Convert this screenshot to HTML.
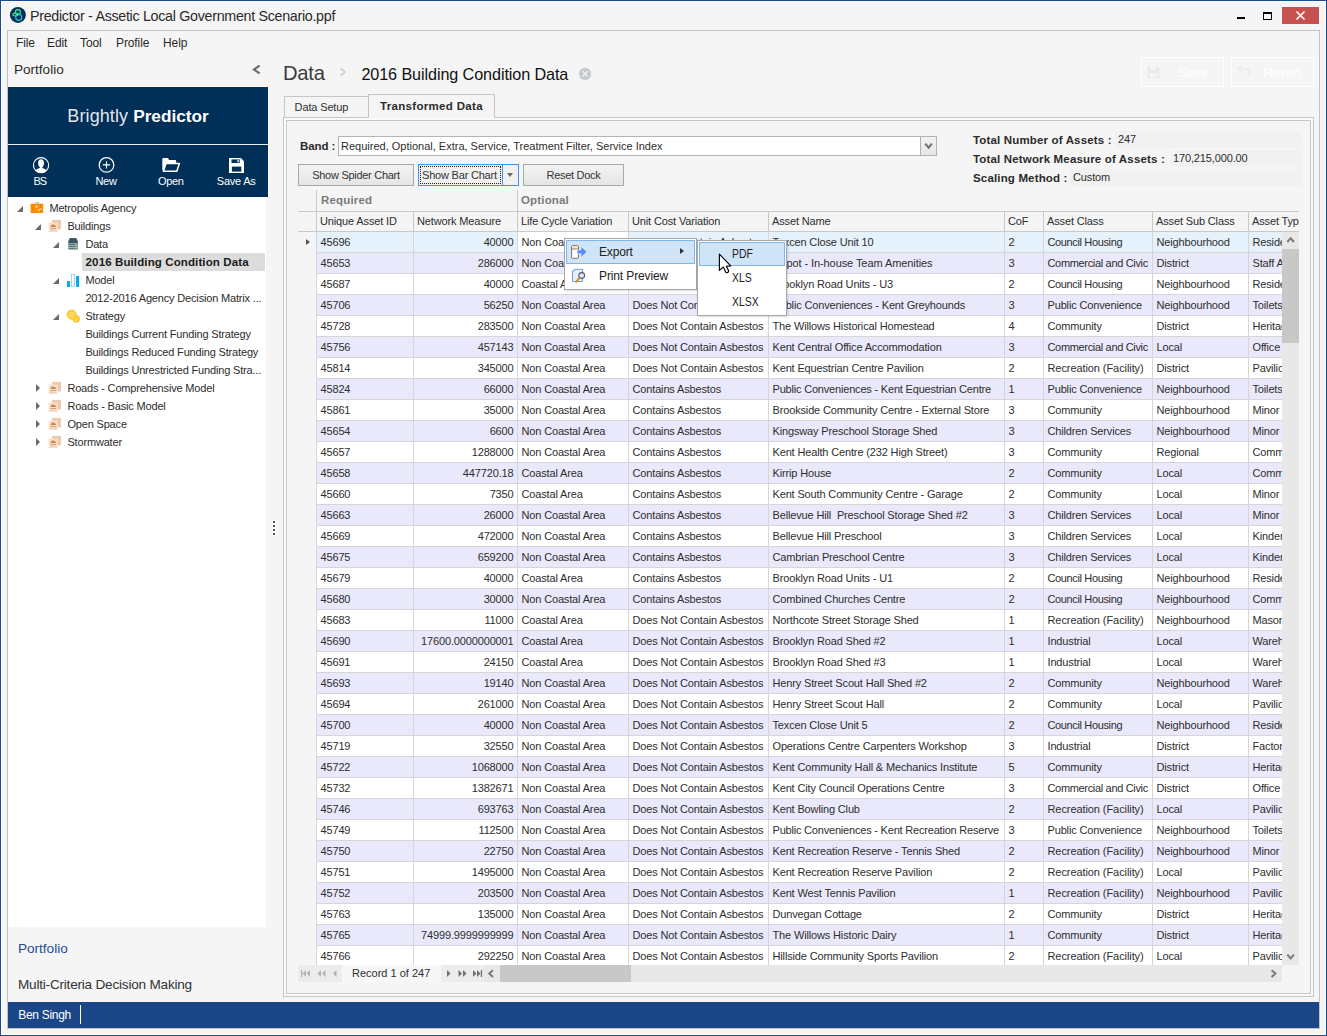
<!DOCTYPE html>
<html><head><meta charset="utf-8"><title>Predictor</title>
<style>
html,body{margin:0;padding:0}
body{width:1327px;height:1036px;position:relative;overflow:hidden;background:#f5f5f5;font-family:"Liberation Sans",sans-serif;font-size:11px;color:#202020}
.a{position:absolute;white-space:pre}
.t{position:absolute;white-space:pre;font-size:11px;letter-spacing:-0.14px;color:#2e2e2e;line-height:14px}
.b{font-weight:bold;font-size:11.5px;letter-spacing:0.16px;color:#2b2b2b}
.tr{position:absolute;white-space:pre;font-size:11px;letter-spacing:-0.17px;color:#2c2c2c;line-height:18px;height:18px}
.tri{position:absolute;width:0;height:0;border-style:solid;border-width:0 0 6px 6px;border-color:transparent transparent #6a6a6a transparent}
.trc{position:absolute;width:0;height:0;border-style:solid;border-width:4px 0 4px 4px;border-color:transparent transparent transparent #6a6a6a}
.row{position:absolute;left:317px;width:965px;height:20px;border-bottom:1px solid #d6d6d6;overflow:hidden}
.c{position:absolute;top:0;height:20px;line-height:20px;white-space:pre;overflow:hidden;font-size:11px;letter-spacing:-0.15px;color:#2e2e2e;border-right:1px solid #d6d6d6;box-sizing:border-box;padding:0 3.5px 0 3.5px}
.r{text-align:right}
.btn{position:absolute;box-sizing:border-box;border:1px solid #a9a9a9;background:linear-gradient(#f3f3f3,#e5e5e5);text-align:center;font-size:11px;letter-spacing:-0.28px;color:#333}
</style></head><body>

<div class="a" style="left:0;top:0;width:1325px;height:1034px;border:1px solid #1c4a8d"></div>
<div class="a" style="left:1px;top:1034px;width:1325px;height:1px;background:#fff"></div>
<div class="a" style="left:1px;top:1px;width:1px;height:1034px;background:#fff"></div>
<div class="a" style="left:1px;top:1px;width:1325px;height:1px;background:#fcfcfc"></div>
<div class="a" style="left:1325px;top:1px;width:1px;height:1034px;background:#fff"></div>
<div class="a" style="left:7px;top:30px;width:1311px;height:997px;border:1px solid #c2c2c2"></div>
<div class="a" style="left:8px;top:1002px;width:1311px;height:26px;background:#1b4788"></div>
<div class="a" style="left:18.3px;top:1003px;line-height:25px;font-size:12px;color:#fff;letter-spacing:-0.3px">Ben Singh</div>
<div class="a" style="left:80px;top:1005px;width:1px;height:19px;background:#fff"></div>
<svg class="a" style="left:9px;top:6px" width="18" height="18" viewBox="0 0 18 18"><circle cx="8.9" cy="8.9" r="8.6" fill="#fff"/><circle cx="8.9" cy="8.9" r="8" fill="#04305a"/>
<g fill="none" stroke-width="1.1"><circle cx="9.7" cy="11.4" r="3" stroke="#20c9bd"/><ellipse cx="6.4" cy="8.5" rx="2.6" ry="1.4" stroke="#34e8a4"/><circle cx="8.9" cy="6.1" r="2.5" stroke="#3af2a0"/></g></svg>
<div class="a" style="left:30px;top:6px;font-size:14.3px;line-height:20px;color:#2a2a2a;letter-spacing:-0.31px">Predictor - Assetic Local Government Scenario.ppf</div>
<div class="a" style="left:1237px;top:17px;width:8px;height:2px;background:#000"></div>
<div class="a" style="left:1263px;top:12px;width:7px;height:5px;border:1px solid #000;border-top-width:2px"></div>
<div class="a" style="left:1282px;top:7px;width:37px;height:17px;background:#c75050"></div>
<svg class="a" style="left:1295px;top:10px" width="11" height="11" viewBox="0 0 11 11"><path d="M1.5 1.5 L9.5 9.5 M9.5 1.5 L1.5 9.5" stroke="#fff" stroke-width="1.7" fill="none"/></svg>
<div class="a" style="left:16px;top:35px;font-size:12px;line-height:16px;color:#2a2a2a;letter-spacing:-0.1px">File</div>
<div class="a" style="left:47px;top:35px;font-size:12px;line-height:16px;color:#2a2a2a;letter-spacing:-0.1px">Edit</div>
<div class="a" style="left:80px;top:35px;font-size:12px;line-height:16px;color:#2a2a2a;letter-spacing:-0.1px">Tool</div>
<div class="a" style="left:116px;top:35px;font-size:12px;line-height:16px;color:#2a2a2a;letter-spacing:-0.1px">Profile</div>
<div class="a" style="left:163px;top:35px;font-size:12px;line-height:16px;color:#2a2a2a;letter-spacing:-0.1px">Help</div>
<div class="a" style="left:14px;top:60px;font-size:13.6px;line-height:20px;color:#2a2a2a;letter-spacing:-0.02px">Portfolio</div>
<svg class="a" style="left:251px;top:63px" width="10" height="13" viewBox="0 0 10 13"><path d="M8.6 2.6 L3 6.5 L8.6 10.4" stroke="#6a6a6a" stroke-width="2.1" fill="none"/></svg>
<div class="a" style="left:8px;top:86px;width:261px;height:111px;background:#fdfdfd"></div>
<div class="a" style="left:8px;top:87px;width:260px;height:110px;background:#003057"></div>
<div class="a" style="left:8px;top:144px;width:260px;height:1px;background:#e8eef3"></div>
<div class="a" style="left:8px;top:104px;width:260px;text-align:center;font-size:18px;line-height:24px;color:#fff"><span style="letter-spacing:0.1px;color:rgba(255,255,255,0.9)">Brightly</span> <span style="font-weight:bold;font-size:17.2px">Predictor</span></div>
<svg class="a" style="left:31px;top:155px" width="20" height="20" viewBox="0 0 20 20"><circle cx="10.05" cy="10.2" r="7.6" fill="none" stroke="#fff" stroke-width="1.1"/><ellipse cx="10.05" cy="8.2" rx="2.9" ry="3.9" fill="#fff"/><path d="M8.8 11 H11.3 V13 Q14.6 13.8 15.6 15.4 Q13.2 17.9 10.05 17.9 Q6.9 17.9 4.5 15.4 Q5.5 13.8 8.8 13Z" fill="#fff"/></svg>
<svg class="a" style="left:96px;top:155px" width="20" height="20" viewBox="0 0 20 20"><circle cx="10.5" cy="9.9" r="7.3" fill="none" stroke="#fff" stroke-width="1.2"/><path d="M10.5 6.3V13.5M6.9 9.9H14.1" stroke="#fff" stroke-width="1.1"/></svg>
<svg class="a" style="left:161px;top:156px" width="20" height="18" viewBox="0 0 20 18"><path d="M1.3 14 V3.3 Q1.3 2.1 2.5 2.1 H6.2 Q7.2 2.1 7.6 3 L8 3.9 H14 Q15.2 3.9 15.2 5.1 V7 H4.8 L2.3 14.6 Z" fill="#fff"/><path d="M2.4 15.2 L5 7.6 H18.4 L15.8 15.2 Z" fill="none" stroke="#fff" stroke-width="1.5" stroke-linejoin="round"/></svg>
<svg class="a" style="left:228px;top:157px" width="17" height="17" viewBox="0 0 17 17"><path d="M1 1 H12.8 L16 4.2 V16 H1 Z" fill="#fff"/><rect x="3.5" y="2.4" width="8.2" height="3.6" fill="#003057"/><rect x="9.4" y="2.9" width="1.3" height="2.4" fill="#fff"/><rect x="3.9" y="9.6" width="9.4" height="5" fill="#003057"/></svg>
<div class="a" style="left:-0.20000000000000284px;width:80px;text-align:center;top:173px;font-size:11px;line-height:16px;color:#fff;letter-spacing:-0.9px">BS</div>
<div class="a" style="left:66px;width:80px;text-align:center;top:173px;font-size:11px;line-height:16px;color:#fff;letter-spacing:-0.3px">New</div>
<div class="a" style="left:130.7px;width:80px;text-align:center;top:173px;font-size:11px;line-height:16px;color:#fff;letter-spacing:-0.35px">Open</div>
<div class="a" style="left:196.2px;width:80px;text-align:center;top:173px;font-size:11px;line-height:16px;color:#fff;letter-spacing:-0.22px">Save As</div>
<div class="a" style="left:8px;top:197px;width:258px;height:730px;background:#fff"></div>
<div class="a" style="left:82px;top:253px;width:183px;height:18px;background:#dcdcdc"></div>
<div class="tri" style="left:17px;top:206px"></div>
<svg class="a" style="left:30px;top:202px" width="14" height="13" viewBox="0 0 14 13"><path d="M5.2 2 Q5.2 0.4 7.1 0.4 Q9 0.4 9 2" fill="none" stroke="#b3a9a9" stroke-width="0.9"/><rect x="0.6" y="1.8" width="12.6" height="9.3" rx="0.5" fill="#ff8c00"/><rect x="2.6" y="1.8" width="0.9" height="9.3" fill="#ee7e00"/><rect x="10.1" y="1.8" width="0.9" height="9.3" fill="#ee7e00"/><circle cx="6.5" cy="4.6" r="1.2" fill="#ffe3b8"/><path d="M7.7 8.6 L11.4 6.6" stroke="#ffd59a" stroke-width="1.4"/></svg>
<div class="tr" style="left:49.4px;top:199px">Metropolis Agency</div>
<div class="tri" style="left:35px;top:224px"></div>
<svg class="a" style="left:48px;top:219px" width="14" height="14" viewBox="0 0 14 14"><rect x="4.1" y="0.9" width="8.9" height="9.5" fill="#f0c9ac"/><rect x="0.7" y="3.6" width="8.9" height="9.4" fill="#f6dfcd"/><path d="M2.2 7.9 L4.5 5 L5.8 6.5 L6.8 5.5 L8 7.9Z" fill="#c98545"/><rect x="2.2" y="9" width="5.9" height="1" fill="#d9a274"/><rect x="2.2" y="10.8" width="5.9" height="0.8" fill="#ecc9ae"/></svg>
<div class="tr" style="left:67.4px;top:217px">Buildings</div>
<div class="tri" style="left:53px;top:242px"></div>
<svg class="a" style="left:68px;top:238px" width="11" height="13" viewBox="0 0 11 13"><path d="M0.2 5 V3.8 L1.4 0.7 Q1.6 0.1 2.3 0.1 H7.8 Q8.5 0.1 8.7 0.7 L9.9 3.8 V5Z" fill="#3f5562"/><rect x="0.2" y="5.3" width="9.7" height="1.9" fill="#5b7686"/><rect x="0.2" y="7.5" width="9.7" height="1.9" fill="#5b7686"/><rect x="0.2" y="9.7" width="9.7" height="1.9" rx="0.5" fill="#5b7686"/><rect x="7" y="5.8" width="2" height="0.9" fill="#7ed321"/><rect x="7" y="8" width="2" height="0.9" fill="#7ed321"/><rect x="7" y="10.2" width="2" height="0.9" fill="#7ed321"/></svg>
<div class="tr" style="left:85.4px;top:235px">Data</div>
<div class="tr" style="left:85.6px;top:253px;font-weight:bold;font-size:11.5px;letter-spacing:0.12px;color:#1a1a1a">2016 Building Condition Data</div>
<div class="tri" style="left:53px;top:278px"></div>
<svg class="a" style="left:67px;top:274px" width="13" height="13" viewBox="0 0 13 13"><rect x="0" y="7.1" width="3" height="5.8" fill="#00a8f0"/><rect x="4.5" y="0.4" width="3" height="12.1" fill="#fff" stroke="#7fd0f7" stroke-width="0.8"/><rect x="9.1" y="2" width="3" height="10.9" fill="#00a8f0"/></svg>
<div class="tr" style="left:85.4px;top:271px">Model</div>
<div class="tr" style="left:85.4px;top:289px">2012-2016 Agency Decision Matrix ...</div>
<div class="tri" style="left:53px;top:314px"></div>
<svg class="a" style="left:66px;top:309px" width="15" height="15" viewBox="0 0 15 15"><circle cx="10.3" cy="9.9" r="3.4" fill="#ffd044" stroke="#f5bb1b" stroke-width="0.7"/><circle cx="5.6" cy="5.6" r="4.6" fill="#ffcf3e" stroke="#f7bd1c" stroke-width="0.8"/><circle cx="5.6" cy="5.6" r="2.8" fill="#ffd95f"/></svg>
<div class="tr" style="left:85.4px;top:307px">Strategy</div>
<div class="tr" style="left:85.4px;top:325px">Buildings Current Funding Strategy</div>
<div class="tr" style="left:85.4px;top:343px">Buildings Reduced Funding Strategy</div>
<div class="tr" style="left:85.4px;top:361px">Buildings Unrestricted Funding Stra...</div>
<div class="trc" style="left:36px;top:384px"></div>
<svg class="a" style="left:48px;top:381px" width="14" height="14" viewBox="0 0 14 14"><rect x="4.1" y="0.9" width="8.9" height="9.5" fill="#f0c9ac"/><rect x="0.7" y="3.6" width="8.9" height="9.4" fill="#f6dfcd"/><path d="M2.2 7.9 L4.5 5 L5.8 6.5 L6.8 5.5 L8 7.9Z" fill="#c98545"/><rect x="2.2" y="9" width="5.9" height="1" fill="#d9a274"/><rect x="2.2" y="10.8" width="5.9" height="0.8" fill="#ecc9ae"/></svg>
<div class="tr" style="left:67.4px;top:379px">Roads - Comprehensive Model</div>
<div class="trc" style="left:36px;top:402px"></div>
<svg class="a" style="left:48px;top:399px" width="14" height="14" viewBox="0 0 14 14"><rect x="4.1" y="0.9" width="8.9" height="9.5" fill="#f0c9ac"/><rect x="0.7" y="3.6" width="8.9" height="9.4" fill="#f6dfcd"/><path d="M2.2 7.9 L4.5 5 L5.8 6.5 L6.8 5.5 L8 7.9Z" fill="#c98545"/><rect x="2.2" y="9" width="5.9" height="1" fill="#d9a274"/><rect x="2.2" y="10.8" width="5.9" height="0.8" fill="#ecc9ae"/></svg>
<div class="tr" style="left:67.4px;top:397px">Roads - Basic Model</div>
<div class="trc" style="left:36px;top:420px"></div>
<svg class="a" style="left:48px;top:417px" width="14" height="14" viewBox="0 0 14 14"><rect x="4.1" y="0.9" width="8.9" height="9.5" fill="#f0c9ac"/><rect x="0.7" y="3.6" width="8.9" height="9.4" fill="#f6dfcd"/><path d="M2.2 7.9 L4.5 5 L5.8 6.5 L6.8 5.5 L8 7.9Z" fill="#c98545"/><rect x="2.2" y="9" width="5.9" height="1" fill="#d9a274"/><rect x="2.2" y="10.8" width="5.9" height="0.8" fill="#ecc9ae"/></svg>
<div class="tr" style="left:67.4px;top:415px">Open Space</div>
<div class="trc" style="left:36px;top:438px"></div>
<svg class="a" style="left:48px;top:435px" width="14" height="14" viewBox="0 0 14 14"><rect x="4.1" y="0.9" width="8.9" height="9.5" fill="#f0c9ac"/><rect x="0.7" y="3.6" width="8.9" height="9.4" fill="#f6dfcd"/><path d="M2.2 7.9 L4.5 5 L5.8 6.5 L6.8 5.5 L8 7.9Z" fill="#c98545"/><rect x="2.2" y="9" width="5.9" height="1" fill="#d9a274"/><rect x="2.2" y="10.8" width="5.9" height="0.8" fill="#ecc9ae"/></svg>
<div class="tr" style="left:67.4px;top:433px">Stormwater</div>
<div class="a" style="left:18px;top:939px;font-size:13.6px;line-height:20px;color:#1f4e96;letter-spacing:-0.02px">Portfolio</div>
<div class="a" style="left:18px;top:975px;font-size:13.6px;line-height:20px;color:#333;letter-spacing:-0.22px">Multi-Criteria Decision Making</div>
<div class="a" style="left:272px;top:520px;width:2px;height:2px;background:#555;border:1px solid #fafafa"></div>
<div class="a" style="left:272px;top:524px;width:2px;height:2px;background:#555;border:1px solid #fafafa"></div>
<div class="a" style="left:272px;top:528px;width:2px;height:2px;background:#555;border:1px solid #fafafa"></div>
<div class="a" style="left:272px;top:532px;width:2px;height:2px;background:#555;border:1px solid #fafafa"></div>
<div class="a" style="left:283px;top:59px;font-size:20.2px;line-height:28px;color:#3a3a3a;letter-spacing:-0.24px">Data</div>
<svg class="a" style="left:339px;top:67px" width="8" height="10" viewBox="0 0 8 10"><path d="M1.7 1.2 L5.8 5 L1.7 8.8" stroke="#c3c8c9" stroke-width="1.5" fill="none"/></svg>
<div class="a" style="left:361.4px;top:62px;font-size:16.2px;line-height:24px;color:#111;letter-spacing:-0.1px">2016 Building Condition Data</div>
<svg class="a" style="left:578px;top:67px" width="14" height="14" viewBox="0 0 14 14"><circle cx="7.05" cy="6.9" r="6.05" fill="#c3c9cc"/><path d="M4.4 4.3 L9.7 9.5 M9.7 4.3 L4.4 9.5" stroke="#f1f3f3" stroke-width="1.3"/></svg>
<div class="a" style="left:1141px;top:57px;width:81px;height:28px;border:1px solid #fff"></div>
<div class="a" style="left:1231px;top:57px;width:81px;height:28px;border:1px solid #fff"></div>
<svg class="a" style="left:1147px;top:66px" width="13" height="13" viewBox="0 0 13 13"><path d="M0.5 0.5 H10 L12.5 3 V12.5 H0.5Z" fill="#e9e9e9"/><rect x="3" y="0.5" width="6" height="3.8" fill="#f5f5f5"/><rect x="2.5" y="7" width="8" height="4.5" fill="#f5f5f5"/></svg>
<div class="a" style="left:1178.6px;top:63px;font-size:13.2px;line-height:20px;color:#fff;letter-spacing:-0.25px">Save</div>
<svg class="a" style="left:1237px;top:65px" width="14" height="14" viewBox="0 0 14 14"><path d="M1.5 4 H8 Q12 4 12 8 Q12 11 10.5 12.5" fill="none" stroke="#e9e9e9" stroke-width="1.3"/><path d="M4.5 1 L1.5 4 L4.5 7" fill="none" stroke="#e9e9e9" stroke-width="1.3"/></svg>
<div class="a" style="left:1263.5px;top:63px;font-size:13.2px;line-height:20px;color:#fff;letter-spacing:-0.25px">Revert</div>
<div class="a" style="left:283px;top:117px;width:1031px;height:880px;border:1px solid #c6c6c6;box-sizing:border-box"></div>
<div class="a" style="left:284px;top:118px;width:1029px;height:878px;border:2px solid #fafafa;box-sizing:border-box"></div>
<div class="a" style="left:286px;top:120px;width:1025px;height:874px;border:1px solid #c8c8c8;box-sizing:border-box"></div>
<div class="a" style="left:284px;top:96px;width:85px;height:22px;border:1px solid #c6c6c6;box-sizing:border-box;background:#f5f5f5"></div>
<div class="t" style="left:294.6px;top:100px">Data Setup</div>
<div class="a" style="left:368px;top:94px;width:127px;height:24px;border:1px solid #c6c6c6;border-bottom:none;box-sizing:border-box;background:#f5f5f5"></div>
<div class="t b" style="left:380px;top:99px;letter-spacing:0.32px">Transformed Data</div>
<div class="t b" style="left:300px;top:139px;letter-spacing:-0.1px">Band :</div>
<div class="a" style="left:338px;top:136px;width:599px;height:20px;border:1px solid #b4b4b4;box-sizing:border-box;background:#fff"></div>
<div class="t" style="left:341px;top:139px;letter-spacing:0px">Required, Optional, Extra, Service, Treatment Filter, Service Index</div>
<div class="a" style="left:920px;top:137px;width:16px;height:18px;border-left:1px solid #b0b0b0;box-sizing:border-box;background:linear-gradient(#f2f2f2,#e6e6e6)"></div>
<svg class="a" style="left:924px;top:142px" width="10" height="8" viewBox="0 0 10 8"><path d="M1.3 1.6 L4.6 5.6 L7.9 1.6" stroke="#6e6e6e" stroke-width="2" fill="none"/></svg>
<div class="t b" style="left:973px;top:133px">Total Number of Assets :</div>
<div class="a" style="left:1115px;top:131px;width:186px;height:17px;background:#f1f1f1"></div>
<div class="t" style="left:1118px;top:132px">247</div>
<div class="t b" style="left:973px;top:152px">Total Network Measure of Assets :</div>
<div class="a" style="left:1170px;top:150px;width:131px;height:17px;background:#f1f1f1"></div>
<div class="t" style="left:1173px;top:151px">170,215,000.00</div>
<div class="t b" style="left:973px;top:171px">Scaling Method :</div>
<div class="a" style="left:1070px;top:169px;width:231px;height:17px;background:#f1f1f1"></div>
<div class="t" style="left:1073px;top:170px">Custom</div>
<div class="btn" style="left:298px;top:164px;width:116px;height:22px;line-height:20px">Show Spider Chart</div>
<div class="btn" style="left:418px;top:164px;width:101px;height:22px;border-color:#3a96f0;background:#f0f0f0"></div>
<div class="a" style="left:420px;top:166px;width:78px;height:16px;border:1px dotted #222;line-height:16px;font-size:11px;letter-spacing:-0.2px;color:#333;text-align:left;padding-left:1px;overflow:hidden">Show Bar Chart</div>
<div class="a" style="left:502px;top:165px;width:1px;height:20px;background:#3a96f0"></div>
<div class="a" style="left:507px;top:173px;width:0;height:0;border-style:solid;border-width:4px 3.5px 0 3.5px;border-color:#666 transparent transparent transparent"></div>
<div class="btn" style="left:523px;top:164px;width:101px;height:22px;line-height:20px">Reset Dock</div>
<div class="a" style="left:298px;top:211px;width:1001px;height:1px;background:#c9c9c9"></div>
<div class="a" style="left:298px;top:231px;width:1001px;height:1px;background:#c9c9c9"></div>
<div class="a" style="left:316px;top:190px;width:1px;height:42px;background:#c9c9c9"></div>
<div class="a" style="left:517px;top:190px;width:1px;height:42px;background:#c9c9c9"></div>
<div class="t b" style="left:321px;top:193px;color:#7a7a7a">Required</div>
<div class="t b" style="left:521px;top:193px;color:#7a7a7a">Optional</div>
<div class="a" style="left:317px;top:212px;width:982px;height:19px;overflow:hidden">
<div class="t" style="left:3px;top:2px">Unique Asset ID</div>
<div class="a" style="left:96px;top:0;width:1px;height:19px;background:#c9c9c9"></div>
<div class="t" style="left:100px;top:2px">Network Measure</div>
<div class="a" style="left:200px;top:0;width:1px;height:19px;background:#c9c9c9"></div>
<div class="t" style="left:204px;top:2px">Life Cycle Variation</div>
<div class="a" style="left:311px;top:0;width:1px;height:19px;background:#c9c9c9"></div>
<div class="t" style="left:315px;top:2px">Unit Cost Variation</div>
<div class="a" style="left:451px;top:0;width:1px;height:19px;background:#c9c9c9"></div>
<div class="t" style="left:455px;top:2px">Asset Name</div>
<div class="a" style="left:687px;top:0;width:1px;height:19px;background:#c9c9c9"></div>
<div class="t" style="left:691px;top:2px">CoF</div>
<div class="a" style="left:726px;top:0;width:1px;height:19px;background:#c9c9c9"></div>
<div class="t" style="left:730px;top:2px">Asset Class</div>
<div class="a" style="left:835px;top:0;width:1px;height:19px;background:#c9c9c9"></div>
<div class="t" style="left:839px;top:2px">Asset Sub Class</div>
<div class="a" style="left:931px;top:0;width:1px;height:19px;background:#c9c9c9"></div>
<div class="t" style="left:935px;top:2px">Asset Type</div>
</div>
<div class="a" style="left:316px;top:232px;width:1px;height:735px;background:#d6d6d6"></div>
<div class="row" style="top:232px;background:#e5f1fb">
<div class="c" style="left:0px;width:97px">45696</div>
<div class="c r" style="left:97px;width:104px">40000</div>
<div class="c" style="left:201px;width:111px;background:#fff">Non Coastal Area</div>
<div class="c" style="left:312px;width:140px">Does Not Contain Asbestos</div>
<div class="c" style="left:452px;width:236px">Texcen Close Unit 10</div>
<div class="c" style="left:688px;width:39px">2</div>
<div class="c" style="left:727px;width:109px;letter-spacing:-0.36px">Council Housing</div>
<div class="c" style="left:836px;width:96px">Neighbourhood</div>
<div class="c" style="left:932px;width:152px">Residential</div>
</div>
<div class="row" style="top:253px;background:#e9e9fb">
<div class="c" style="left:0px;width:97px">45653</div>
<div class="c r" style="left:97px;width:104px">286000</div>
<div class="c" style="left:201px;width:111px">Non Coastal Area</div>
<div class="c" style="left:312px;width:140px">Does Not Contain Asbestos</div>
<div class="c" style="left:452px;width:236px;letter-spacing:-0.08px">Depot - In-house Team Amenities</div>
<div class="c" style="left:688px;width:39px">3</div>
<div class="c" style="left:727px;width:109px;letter-spacing:-0.33px">Commercial and Civic</div>
<div class="c" style="left:836px;width:96px">District</div>
<div class="c" style="left:932px;width:152px">Staff Amenities</div>
</div>
<div class="row" style="top:274px;background:#ffffff">
<div class="c" style="left:0px;width:97px">45687</div>
<div class="c r" style="left:97px;width:104px">40000</div>
<div class="c" style="left:201px;width:111px">Coastal Area</div>
<div class="c" style="left:312px;width:140px">Does Not Contain Asbestos</div>
<div class="c" style="left:452px;width:236px">Brooklyn Road Units - U3</div>
<div class="c" style="left:688px;width:39px">2</div>
<div class="c" style="left:727px;width:109px;letter-spacing:-0.36px">Council Housing</div>
<div class="c" style="left:836px;width:96px">Neighbourhood</div>
<div class="c" style="left:932px;width:152px">Residential</div>
</div>
<div class="row" style="top:295px;background:#e9e9fb">
<div class="c" style="left:0px;width:97px">45706</div>
<div class="c r" style="left:97px;width:104px">56250</div>
<div class="c" style="left:201px;width:111px">Non Coastal Area</div>
<div class="c" style="left:312px;width:140px">Does Not Contain Asbestos</div>
<div class="c" style="left:452px;width:236px">Public Conveniences - Kent Greyhounds</div>
<div class="c" style="left:688px;width:39px">3</div>
<div class="c" style="left:727px;width:109px">Public Convenience</div>
<div class="c" style="left:836px;width:96px">Neighbourhood</div>
<div class="c" style="left:932px;width:152px">Toilets</div>
</div>
<div class="row" style="top:316px;background:#ffffff">
<div class="c" style="left:0px;width:97px">45728</div>
<div class="c r" style="left:97px;width:104px">283500</div>
<div class="c" style="left:201px;width:111px">Non Coastal Area</div>
<div class="c" style="left:312px;width:140px">Does Not Contain Asbestos</div>
<div class="c" style="left:452px;width:236px">The Willows Historical Homestead</div>
<div class="c" style="left:688px;width:39px">4</div>
<div class="c" style="left:727px;width:109px">Community</div>
<div class="c" style="left:836px;width:96px">District</div>
<div class="c" style="left:932px;width:152px">Heritage</div>
</div>
<div class="row" style="top:337px;background:#e9e9fb">
<div class="c" style="left:0px;width:97px">45756</div>
<div class="c r" style="left:97px;width:104px">457143</div>
<div class="c" style="left:201px;width:111px">Non Coastal Area</div>
<div class="c" style="left:312px;width:140px">Does Not Contain Asbestos</div>
<div class="c" style="left:452px;width:236px">Kent Central Office Accommodation</div>
<div class="c" style="left:688px;width:39px">3</div>
<div class="c" style="left:727px;width:109px;letter-spacing:-0.33px">Commercial and Civic</div>
<div class="c" style="left:836px;width:96px">Local</div>
<div class="c" style="left:932px;width:152px">Office</div>
</div>
<div class="row" style="top:358px;background:#ffffff">
<div class="c" style="left:0px;width:97px">45814</div>
<div class="c r" style="left:97px;width:104px">345000</div>
<div class="c" style="left:201px;width:111px">Non Coastal Area</div>
<div class="c" style="left:312px;width:140px">Does Not Contain Asbestos</div>
<div class="c" style="left:452px;width:236px">Kent Equestrian Centre Pavilion</div>
<div class="c" style="left:688px;width:39px">2</div>
<div class="c" style="left:727px;width:109px;letter-spacing:-0.08px">Recreation (Facility)</div>
<div class="c" style="left:836px;width:96px">District</div>
<div class="c" style="left:932px;width:152px">Pavilion</div>
</div>
<div class="row" style="top:379px;background:#e9e9fb">
<div class="c" style="left:0px;width:97px">45824</div>
<div class="c r" style="left:97px;width:104px">66000</div>
<div class="c" style="left:201px;width:111px">Non Coastal Area</div>
<div class="c" style="left:312px;width:140px">Contains Asbestos</div>
<div class="c" style="left:452px;width:236px;letter-spacing:-0.19px">Public Conveniences - Kent Equestrian Centre</div>
<div class="c" style="left:688px;width:39px">1</div>
<div class="c" style="left:727px;width:109px">Public Convenience</div>
<div class="c" style="left:836px;width:96px">Neighbourhood</div>
<div class="c" style="left:932px;width:152px">Toilets</div>
</div>
<div class="row" style="top:400px;background:#ffffff">
<div class="c" style="left:0px;width:97px">45861</div>
<div class="c r" style="left:97px;width:104px">35000</div>
<div class="c" style="left:201px;width:111px">Non Coastal Area</div>
<div class="c" style="left:312px;width:140px">Contains Asbestos</div>
<div class="c" style="left:452px;width:236px">Brookside Community Centre - External Store</div>
<div class="c" style="left:688px;width:39px">3</div>
<div class="c" style="left:727px;width:109px">Community</div>
<div class="c" style="left:836px;width:96px">Neighbourhood</div>
<div class="c" style="left:932px;width:152px">Minor Structure</div>
</div>
<div class="row" style="top:421px;background:#e9e9fb">
<div class="c" style="left:0px;width:97px">45654</div>
<div class="c r" style="left:97px;width:104px">6600</div>
<div class="c" style="left:201px;width:111px">Non Coastal Area</div>
<div class="c" style="left:312px;width:140px">Contains Asbestos</div>
<div class="c" style="left:452px;width:236px">Kingsway Preschool Storage Shed</div>
<div class="c" style="left:688px;width:39px">3</div>
<div class="c" style="left:727px;width:109px">Children Services</div>
<div class="c" style="left:836px;width:96px">Neighbourhood</div>
<div class="c" style="left:932px;width:152px">Minor Structure</div>
</div>
<div class="row" style="top:442px;background:#ffffff">
<div class="c" style="left:0px;width:97px">45657</div>
<div class="c r" style="left:97px;width:104px">1288000</div>
<div class="c" style="left:201px;width:111px">Non Coastal Area</div>
<div class="c" style="left:312px;width:140px">Contains Asbestos</div>
<div class="c" style="left:452px;width:236px">Kent Health Centre (232 High Street)</div>
<div class="c" style="left:688px;width:39px">3</div>
<div class="c" style="left:727px;width:109px">Community</div>
<div class="c" style="left:836px;width:96px">Regional</div>
<div class="c" style="left:932px;width:152px">Community</div>
</div>
<div class="row" style="top:463px;background:#e9e9fb">
<div class="c" style="left:0px;width:97px">45658</div>
<div class="c r" style="left:97px;width:104px">447720.18</div>
<div class="c" style="left:201px;width:111px">Coastal Area</div>
<div class="c" style="left:312px;width:140px">Contains Asbestos</div>
<div class="c" style="left:452px;width:236px">Kirrip House</div>
<div class="c" style="left:688px;width:39px">2</div>
<div class="c" style="left:727px;width:109px">Community</div>
<div class="c" style="left:836px;width:96px">Local</div>
<div class="c" style="left:932px;width:152px">Community</div>
</div>
<div class="row" style="top:484px;background:#ffffff">
<div class="c" style="left:0px;width:97px">45660</div>
<div class="c r" style="left:97px;width:104px">7350</div>
<div class="c" style="left:201px;width:111px">Coastal Area</div>
<div class="c" style="left:312px;width:140px">Contains Asbestos</div>
<div class="c" style="left:452px;width:236px">Kent South Community Centre - Garage</div>
<div class="c" style="left:688px;width:39px">2</div>
<div class="c" style="left:727px;width:109px">Community</div>
<div class="c" style="left:836px;width:96px">Local</div>
<div class="c" style="left:932px;width:152px">Minor Structure</div>
</div>
<div class="row" style="top:505px;background:#e9e9fb">
<div class="c" style="left:0px;width:97px">45663</div>
<div class="c r" style="left:97px;width:104px">26000</div>
<div class="c" style="left:201px;width:111px">Non Coastal Area</div>
<div class="c" style="left:312px;width:140px">Contains Asbestos</div>
<div class="c" style="left:452px;width:236px">Bellevue Hill &nbsp;Preschool Storage Shed #2</div>
<div class="c" style="left:688px;width:39px">3</div>
<div class="c" style="left:727px;width:109px">Children Services</div>
<div class="c" style="left:836px;width:96px">Local</div>
<div class="c" style="left:932px;width:152px">Minor Structure</div>
</div>
<div class="row" style="top:526px;background:#ffffff">
<div class="c" style="left:0px;width:97px">45669</div>
<div class="c r" style="left:97px;width:104px">472000</div>
<div class="c" style="left:201px;width:111px">Non Coastal Area</div>
<div class="c" style="left:312px;width:140px">Contains Asbestos</div>
<div class="c" style="left:452px;width:236px">Bellevue Hill Preschool</div>
<div class="c" style="left:688px;width:39px">3</div>
<div class="c" style="left:727px;width:109px">Children Services</div>
<div class="c" style="left:836px;width:96px">Local</div>
<div class="c" style="left:932px;width:152px">Kindergarten</div>
</div>
<div class="row" style="top:547px;background:#e9e9fb">
<div class="c" style="left:0px;width:97px">45675</div>
<div class="c r" style="left:97px;width:104px">659200</div>
<div class="c" style="left:201px;width:111px">Non Coastal Area</div>
<div class="c" style="left:312px;width:140px">Contains Asbestos</div>
<div class="c" style="left:452px;width:236px">Cambrian Preschool Centre</div>
<div class="c" style="left:688px;width:39px">3</div>
<div class="c" style="left:727px;width:109px">Children Services</div>
<div class="c" style="left:836px;width:96px">Local</div>
<div class="c" style="left:932px;width:152px">Kindergarten</div>
</div>
<div class="row" style="top:568px;background:#ffffff">
<div class="c" style="left:0px;width:97px">45679</div>
<div class="c r" style="left:97px;width:104px">40000</div>
<div class="c" style="left:201px;width:111px">Coastal Area</div>
<div class="c" style="left:312px;width:140px">Contains Asbestos</div>
<div class="c" style="left:452px;width:236px">Brooklyn Road Units - U1</div>
<div class="c" style="left:688px;width:39px">2</div>
<div class="c" style="left:727px;width:109px;letter-spacing:-0.36px">Council Housing</div>
<div class="c" style="left:836px;width:96px">Neighbourhood</div>
<div class="c" style="left:932px;width:152px">Residential</div>
</div>
<div class="row" style="top:589px;background:#e9e9fb">
<div class="c" style="left:0px;width:97px">45680</div>
<div class="c r" style="left:97px;width:104px">30000</div>
<div class="c" style="left:201px;width:111px">Non Coastal Area</div>
<div class="c" style="left:312px;width:140px">Contains Asbestos</div>
<div class="c" style="left:452px;width:236px">Combined Churches Centre</div>
<div class="c" style="left:688px;width:39px">2</div>
<div class="c" style="left:727px;width:109px;letter-spacing:-0.36px">Council Housing</div>
<div class="c" style="left:836px;width:96px">Neighbourhood</div>
<div class="c" style="left:932px;width:152px">Community</div>
</div>
<div class="row" style="top:610px;background:#ffffff">
<div class="c" style="left:0px;width:97px">45683</div>
<div class="c r" style="left:97px;width:104px">11000</div>
<div class="c" style="left:201px;width:111px">Coastal Area</div>
<div class="c" style="left:312px;width:140px">Does Not Contain Asbestos</div>
<div class="c" style="left:452px;width:236px">Northcote Street Storage Shed</div>
<div class="c" style="left:688px;width:39px">1</div>
<div class="c" style="left:727px;width:109px;letter-spacing:-0.08px">Recreation (Facility)</div>
<div class="c" style="left:836px;width:96px">Neighbourhood</div>
<div class="c" style="left:932px;width:152px">Masonry</div>
</div>
<div class="row" style="top:631px;background:#e9e9fb">
<div class="c" style="left:0px;width:97px">45690</div>
<div class="c r" style="left:97px;width:104px">17600.0000000001</div>
<div class="c" style="left:201px;width:111px">Coastal Area</div>
<div class="c" style="left:312px;width:140px">Does Not Contain Asbestos</div>
<div class="c" style="left:452px;width:236px">Brooklyn Road Shed #2</div>
<div class="c" style="left:688px;width:39px">1</div>
<div class="c" style="left:727px;width:109px">Industrial</div>
<div class="c" style="left:836px;width:96px">Local</div>
<div class="c" style="left:932px;width:152px">Warehouse</div>
</div>
<div class="row" style="top:652px;background:#ffffff">
<div class="c" style="left:0px;width:97px">45691</div>
<div class="c r" style="left:97px;width:104px">24150</div>
<div class="c" style="left:201px;width:111px">Coastal Area</div>
<div class="c" style="left:312px;width:140px">Does Not Contain Asbestos</div>
<div class="c" style="left:452px;width:236px">Brooklyn Road Shed #3</div>
<div class="c" style="left:688px;width:39px">1</div>
<div class="c" style="left:727px;width:109px">Industrial</div>
<div class="c" style="left:836px;width:96px">Local</div>
<div class="c" style="left:932px;width:152px">Warehouse</div>
</div>
<div class="row" style="top:673px;background:#e9e9fb">
<div class="c" style="left:0px;width:97px">45693</div>
<div class="c r" style="left:97px;width:104px">19140</div>
<div class="c" style="left:201px;width:111px">Non Coastal Area</div>
<div class="c" style="left:312px;width:140px">Does Not Contain Asbestos</div>
<div class="c" style="left:452px;width:236px">Henry Street Scout Hall Shed #2</div>
<div class="c" style="left:688px;width:39px">2</div>
<div class="c" style="left:727px;width:109px">Community</div>
<div class="c" style="left:836px;width:96px">Neighbourhood</div>
<div class="c" style="left:932px;width:152px">Warehouse</div>
</div>
<div class="row" style="top:694px;background:#ffffff">
<div class="c" style="left:0px;width:97px">45694</div>
<div class="c r" style="left:97px;width:104px">261000</div>
<div class="c" style="left:201px;width:111px">Non Coastal Area</div>
<div class="c" style="left:312px;width:140px">Does Not Contain Asbestos</div>
<div class="c" style="left:452px;width:236px">Henry Street Scout Hall</div>
<div class="c" style="left:688px;width:39px">2</div>
<div class="c" style="left:727px;width:109px">Community</div>
<div class="c" style="left:836px;width:96px">Local</div>
<div class="c" style="left:932px;width:152px">Pavilion</div>
</div>
<div class="row" style="top:715px;background:#e9e9fb">
<div class="c" style="left:0px;width:97px">45700</div>
<div class="c r" style="left:97px;width:104px">40000</div>
<div class="c" style="left:201px;width:111px">Non Coastal Area</div>
<div class="c" style="left:312px;width:140px">Does Not Contain Asbestos</div>
<div class="c" style="left:452px;width:236px">Texcen Close Unit 5</div>
<div class="c" style="left:688px;width:39px">2</div>
<div class="c" style="left:727px;width:109px;letter-spacing:-0.36px">Council Housing</div>
<div class="c" style="left:836px;width:96px">Neighbourhood</div>
<div class="c" style="left:932px;width:152px">Residential</div>
</div>
<div class="row" style="top:736px;background:#ffffff">
<div class="c" style="left:0px;width:97px">45719</div>
<div class="c r" style="left:97px;width:104px">32550</div>
<div class="c" style="left:201px;width:111px">Non Coastal Area</div>
<div class="c" style="left:312px;width:140px">Does Not Contain Asbestos</div>
<div class="c" style="left:452px;width:236px">Operations Centre Carpenters Workshop</div>
<div class="c" style="left:688px;width:39px">3</div>
<div class="c" style="left:727px;width:109px">Industrial</div>
<div class="c" style="left:836px;width:96px">District</div>
<div class="c" style="left:932px;width:152px">Factory</div>
</div>
<div class="row" style="top:757px;background:#e9e9fb">
<div class="c" style="left:0px;width:97px">45722</div>
<div class="c r" style="left:97px;width:104px">1068000</div>
<div class="c" style="left:201px;width:111px">Non Coastal Area</div>
<div class="c" style="left:312px;width:140px">Does Not Contain Asbestos</div>
<div class="c" style="left:452px;width:236px">Kent Community Hall &amp; Mechanics Institute</div>
<div class="c" style="left:688px;width:39px">5</div>
<div class="c" style="left:727px;width:109px">Community</div>
<div class="c" style="left:836px;width:96px">District</div>
<div class="c" style="left:932px;width:152px">Heritage</div>
</div>
<div class="row" style="top:778px;background:#ffffff">
<div class="c" style="left:0px;width:97px">45732</div>
<div class="c r" style="left:97px;width:104px">1382671</div>
<div class="c" style="left:201px;width:111px">Non Coastal Area</div>
<div class="c" style="left:312px;width:140px">Does Not Contain Asbestos</div>
<div class="c" style="left:452px;width:236px">Kent City Council Operations Centre</div>
<div class="c" style="left:688px;width:39px">3</div>
<div class="c" style="left:727px;width:109px;letter-spacing:-0.33px">Commercial and Civic</div>
<div class="c" style="left:836px;width:96px">District</div>
<div class="c" style="left:932px;width:152px">Office</div>
</div>
<div class="row" style="top:799px;background:#e9e9fb">
<div class="c" style="left:0px;width:97px">45746</div>
<div class="c r" style="left:97px;width:104px">693763</div>
<div class="c" style="left:201px;width:111px">Non Coastal Area</div>
<div class="c" style="left:312px;width:140px">Does Not Contain Asbestos</div>
<div class="c" style="left:452px;width:236px">Kent Bowling Club</div>
<div class="c" style="left:688px;width:39px">2</div>
<div class="c" style="left:727px;width:109px;letter-spacing:-0.08px">Recreation (Facility)</div>
<div class="c" style="left:836px;width:96px">Local</div>
<div class="c" style="left:932px;width:152px">Pavilion</div>
</div>
<div class="row" style="top:820px;background:#ffffff">
<div class="c" style="left:0px;width:97px">45749</div>
<div class="c r" style="left:97px;width:104px">112500</div>
<div class="c" style="left:201px;width:111px">Non Coastal Area</div>
<div class="c" style="left:312px;width:140px">Does Not Contain Asbestos</div>
<div class="c" style="left:452px;width:236px;letter-spacing:-0.2px">Public Conveniences - Kent Recreation Reserve</div>
<div class="c" style="left:688px;width:39px">3</div>
<div class="c" style="left:727px;width:109px">Public Convenience</div>
<div class="c" style="left:836px;width:96px">Neighbourhood</div>
<div class="c" style="left:932px;width:152px">Toilets</div>
</div>
<div class="row" style="top:841px;background:#e9e9fb">
<div class="c" style="left:0px;width:97px">45750</div>
<div class="c r" style="left:97px;width:104px">22750</div>
<div class="c" style="left:201px;width:111px">Non Coastal Area</div>
<div class="c" style="left:312px;width:140px">Does Not Contain Asbestos</div>
<div class="c" style="left:452px;width:236px">Kent Recreation Reserve - Tennis Shed</div>
<div class="c" style="left:688px;width:39px">2</div>
<div class="c" style="left:727px;width:109px;letter-spacing:-0.08px">Recreation (Facility)</div>
<div class="c" style="left:836px;width:96px">Neighbourhood</div>
<div class="c" style="left:932px;width:152px">Minor Structure</div>
</div>
<div class="row" style="top:862px;background:#ffffff">
<div class="c" style="left:0px;width:97px">45751</div>
<div class="c r" style="left:97px;width:104px">1495000</div>
<div class="c" style="left:201px;width:111px">Non Coastal Area</div>
<div class="c" style="left:312px;width:140px">Does Not Contain Asbestos</div>
<div class="c" style="left:452px;width:236px">Kent Recreation Reserve Pavilion</div>
<div class="c" style="left:688px;width:39px">2</div>
<div class="c" style="left:727px;width:109px;letter-spacing:-0.08px">Recreation (Facility)</div>
<div class="c" style="left:836px;width:96px">Local</div>
<div class="c" style="left:932px;width:152px">Pavilion</div>
</div>
<div class="row" style="top:883px;background:#e9e9fb">
<div class="c" style="left:0px;width:97px">45752</div>
<div class="c r" style="left:97px;width:104px">203500</div>
<div class="c" style="left:201px;width:111px">Non Coastal Area</div>
<div class="c" style="left:312px;width:140px">Does Not Contain Asbestos</div>
<div class="c" style="left:452px;width:236px">Kent West Tennis Pavilion</div>
<div class="c" style="left:688px;width:39px">1</div>
<div class="c" style="left:727px;width:109px;letter-spacing:-0.08px">Recreation (Facility)</div>
<div class="c" style="left:836px;width:96px">Neighbourhood</div>
<div class="c" style="left:932px;width:152px">Pavilion</div>
</div>
<div class="row" style="top:904px;background:#ffffff">
<div class="c" style="left:0px;width:97px">45763</div>
<div class="c r" style="left:97px;width:104px">135000</div>
<div class="c" style="left:201px;width:111px">Non Coastal Area</div>
<div class="c" style="left:312px;width:140px">Does Not Contain Asbestos</div>
<div class="c" style="left:452px;width:236px">Dunvegan Cottage</div>
<div class="c" style="left:688px;width:39px">2</div>
<div class="c" style="left:727px;width:109px">Community</div>
<div class="c" style="left:836px;width:96px">District</div>
<div class="c" style="left:932px;width:152px">Heritage</div>
</div>
<div class="row" style="top:925px;background:#e9e9fb">
<div class="c" style="left:0px;width:97px">45765</div>
<div class="c r" style="left:97px;width:104px">74999.9999999999</div>
<div class="c" style="left:201px;width:111px">Non Coastal Area</div>
<div class="c" style="left:312px;width:140px">Does Not Contain Asbestos</div>
<div class="c" style="left:452px;width:236px">The Willows Historic Dairy</div>
<div class="c" style="left:688px;width:39px">1</div>
<div class="c" style="left:727px;width:109px">Community</div>
<div class="c" style="left:836px;width:96px">District</div>
<div class="c" style="left:932px;width:152px">Heritage</div>
</div>
<div class="row" style="top:946px;background:#ffffff">
<div class="c" style="left:0px;width:97px">45766</div>
<div class="c r" style="left:97px;width:104px">292250</div>
<div class="c" style="left:201px;width:111px">Non Coastal Area</div>
<div class="c" style="left:312px;width:140px">Does Not Contain Asbestos</div>
<div class="c" style="left:452px;width:236px">Hillside Community Sports Pavilion</div>
<div class="c" style="left:688px;width:39px">2</div>
<div class="c" style="left:727px;width:109px;letter-spacing:-0.08px">Recreation (Facility)</div>
<div class="c" style="left:836px;width:96px">Local</div>
<div class="c" style="left:932px;width:152px">Pavilion</div>
</div>
<div class="a" style="left:306px;top:238.5px;width:0;height:0;border-style:solid;border-width:3.7px 0 3.7px 4.2px;border-color:transparent transparent transparent #555"></div>
<div class="a" style="left:1282px;top:232px;width:17px;height:733px;background:#e8e8e8"></div>
<div class="a" style="left:1282px;top:249px;width:17px;height:94px;background:#c8c8c8"></div>
<svg class="a" style="left:1286px;top:236px" width="10" height="8" viewBox="0 0 10 8"><path d="M1.3 6 L4.6 2.2 L7.9 6" stroke="#7a7a7a" stroke-width="2" fill="none"/></svg>
<svg class="a" style="left:1286px;top:953px" width="10" height="8" viewBox="0 0 10 8"><path d="M1.3 1.6 L4.6 5.4 L7.9 1.6" stroke="#7a7a7a" stroke-width="2" fill="none"/></svg>
<div class="a" style="left:298px;top:965px;width:186px;height:17px;background:#ececec"></div>
<div class="a" style="left:342px;top:965px;width:99px;height:17px;background:#f7f7f7"></div>
<div class="t" style="left:352px;top:966.4px;letter-spacing:0px">Record 1 of 247</div>
<div class="a" style="left:484px;top:965px;width:798px;height:17px;background:#e8e8e8"></div>
<div class="a" style="left:500px;top:965px;width:131px;height:17px;background:#c8c8c8"></div>
<svg class="a" style="left:487px;top:969px" width="8" height="10" viewBox="0 0 8 10"><path d="M6 1.3 L2.2 4.6 L6 7.9" stroke="#7a7a7a" stroke-width="2" fill="none"/></svg>
<svg class="a" style="left:1270px;top:969px" width="8" height="10" viewBox="0 0 8 10"><path d="M1.6 1.3 L5.4 4.6 L1.6 7.9" stroke="#7a7a7a" stroke-width="2" fill="none"/></svg>
<svg class="a" style="left:301px;top:969px" width="10" height="9" viewBox="0 0 10 9" fill="#b4b4b4"><rect x="0" y="1" width="1.3" height="7"/><path d="M5 1 V8 L1.5 4.5Z"/><path d="M9 1 V8 L5.5 4.5Z"/></svg>
<svg class="a" style="left:317px;top:969px" width="10" height="9" viewBox="0 0 10 9" fill="#b4b4b4"><path d="M4 1 V8 L0.5 4.5Z"/><path d="M8.5 1 V8 L5 4.5Z"/></svg>
<svg class="a" style="left:332px;top:969px" width="10" height="9" viewBox="0 0 10 9" fill="#b4b4b4"><path d="M4.5 1 V8 L1 4.5Z"/></svg>
<svg class="a" style="left:446px;top:969px" width="10" height="9" viewBox="0 0 10 9" fill="#707070"><path d="M1 1 V8 L4.5 4.5Z"/></svg>
<svg class="a" style="left:458px;top:969px" width="10" height="9" viewBox="0 0 10 9" fill="#707070"><path d="M0.5 1 V8 L4 4.5Z"/><path d="M5 1 V8 L8.5 4.5Z"/></svg>
<svg class="a" style="left:473px;top:969px" width="10" height="9" viewBox="0 0 10 9" fill="#707070"><path d="M0 1 V8 L3.5 4.5Z"/><path d="M4 1 V8 L7.5 4.5Z"/><rect x="7.8" y="1" width="1.3" height="7"/></svg>
<div class="a" style="left:564px;top:238px;width:133px;height:52px;box-sizing:border-box;border:1px solid #a6a6a6;background:#fff;box-shadow:1px 1px 2px rgba(0,0,0,0.15)"></div>
<div class="a" style="left:566px;top:240px;width:129px;height:24px;box-sizing:border-box;border:1px solid #7fb6ec;background:#cfe4f7"></div>
<div class="a" style="left:599px;top:244px;font-size:12px;line-height:16px;color:#222;letter-spacing:-0.15px">Export</div>
<div class="a" style="left:599px;top:268px;font-size:12px;line-height:16px;color:#222;letter-spacing:-0.12px">Print Preview</div>
<div class="a" style="left:680px;top:248px;width:0;height:0;border-style:solid;border-width:3.5px 0 3.5px 4px;border-color:transparent transparent transparent #333"></div>
<svg class="a" style="left:571px;top:244px" width="17" height="16" viewBox="0 0 17 16"><rect x="0.6" y="1.7" width="6.9" height="12.6" rx="1" fill="#fff" stroke="#8b6b5c" stroke-width="1"/><rect x="1.1" y="2.2" width="5.9" height="2.6" fill="#efe4cc"/><path d="M1 5 H7" stroke="#8b6b5c" stroke-width="0.9"/><path d="M6.1 5.9 H10 V2.2 L16 7.8 L10 13.4 V9.8 H6.1Z" fill="#5b8cff" stroke="#e9f2ff" stroke-width="0.7"/></svg>
<svg class="a" style="left:571px;top:268px" width="16" height="16" viewBox="0 0 16 16"><path d="M3.2 1.4 H11.5 V13.5 H1.5 V3.1Z" fill="#e9eef8" stroke="#6d9fd6" stroke-width="1"/><path d="M1.5 3.1 H3.2 V1.4" fill="#fff" stroke="#6d9fd6" stroke-width="0.7"/><circle cx="10.7" cy="7.5" r="2.9" fill="#cfeef5" stroke="#5a5570" stroke-width="1.1"/><path d="M8.6 9.8 L4.6 14.4" stroke="#e08a0c" stroke-width="1.9"/></svg>
<div class="a" style="left:697px;top:240px;width:90px;height:76px;box-sizing:border-box;border:1px solid #a6a6a6;background:#fff;box-shadow:1px 1px 2px rgba(0,0,0,0.15)"></div>
<div class="a" style="left:699px;top:242px;width:86px;height:24px;box-sizing:border-box;border:1px solid #7fb6ec;background:#cfe4f7"></div>
<div class="a" style="left:732px;top:246px;font-size:12px;line-height:16px;color:#222;transform:scaleX(0.87);transform-origin:0 0">PDF</div>
<div class="a" style="left:732px;top:270px;font-size:12px;line-height:16px;color:#222;transform:scaleX(0.87);transform-origin:0 0">XLS</div>
<div class="a" style="left:732px;top:294px;font-size:12px;line-height:16px;color:#222;transform:scaleX(0.87);transform-origin:0 0">XLSX</div>
<svg class="a" style="left:718px;top:253px" width="15" height="22" viewBox="0 0 15 22"><path d="M1.4 1.2 L1.4 17.4 L5.4 14 L7.6 19 Q8.4 20.1 9.6 19.5 Q10.9 18.9 10.5 17.6 L8.4 13.2 L12.7 12.9 Z" fill="#fff" stroke="#000" stroke-width="1.15" stroke-linejoin="round"/></svg>
</body></html>
